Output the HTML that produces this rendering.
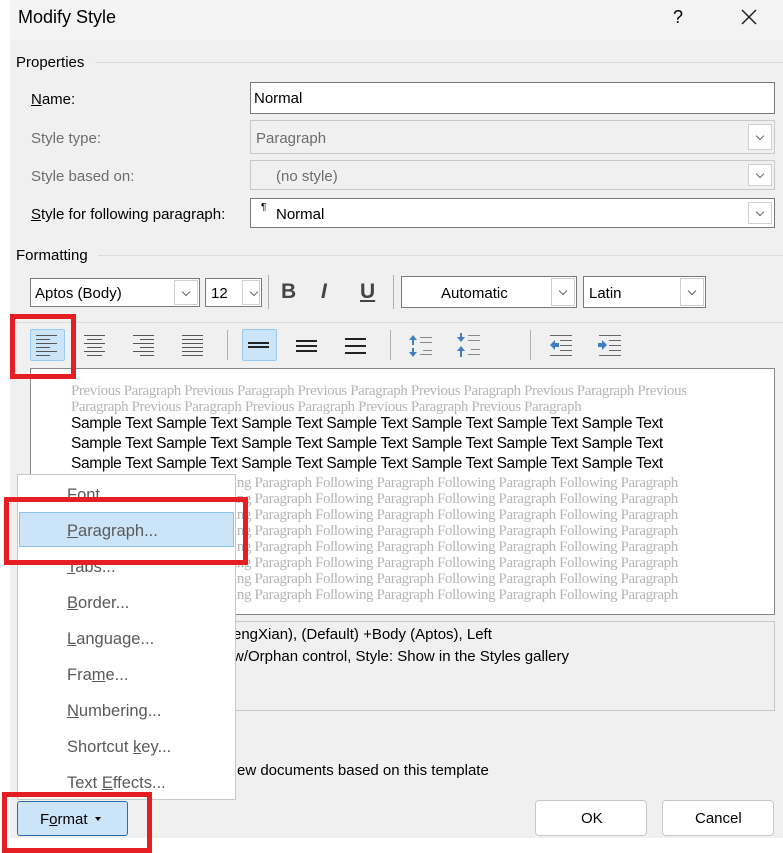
<!DOCTYPE html>
<html><head><meta charset="utf-8"><style>
*{margin:0;padding:0;box-sizing:border-box}
body{width:783px;height:853px;background:#fff;position:relative;overflow:hidden;font-family:"Liberation Sans",sans-serif;color:#000}
.a{position:absolute;white-space:nowrap}
.t{font-size:15px}
.g{color:#6d6d6d}
.box{position:absolute;border:1px solid #7a7a7a;background:#fff}
.dis{background:#f0f0f0;border-color:#c8c8c8}
.dd{position:absolute;right:2px;top:3px;bottom:3px;width:24px;border:1px solid #d0d0d0;background:#fff;font-size:10px;color:#777;text-align:center}
.dd:after{content:"";position:absolute;left:8px;top:50%;margin-top:-4px;width:5px;height:5px;border-right:1px solid #666;border-bottom:1px solid #666;transform:rotate(45deg)}
.sep{position:absolute;width:1px;background:#b0b0b0}
.ico{position:absolute}
.sel{position:absolute;background:#cce4f7;border:1px solid #99c9ef;border-radius:2px}
.red{position:absolute;border:5px solid #e41e22}
.mi{position:absolute;left:67px;font-size:16.5px;color:#5a5a5a}
.prev{font-family:"Liberation Serif",serif;color:#b5b5b5;font-size:14.9px;letter-spacing:-0.35px}
.smp{font-size:15.5px;letter-spacing:-0.35px}
.fol{font-family:"Liberation Serif",serif;color:#b5b5b5;font-size:14.9px;letter-spacing:-0.35px}
u{text-decoration:underline}
</style></head><body>
<div class="a" style="left:10px;top:0;width:773px;height:40px;background:#f3f3f3"></div>
<div class="a" style="left:10px;top:40px;width:773px;height:798px;background:#f0f0f0"></div>
<div class="a" style="left:18px;top:7px;font-size:18px">Modify Style</div>
<div class="a" style="left:673px;top:7px;font-size:18px">?</div>
<svg class="ico" style="left:741px;top:9px" width="16" height="16"><path d="M1 1L15 15M15 1L1 15" stroke="#222" stroke-width="1.5"/></svg>

<div class="a t" style="left:16px;top:54px">Properties</div>
<div class="a" style="left:95px;top:62px;width:688px;height:1px;background:#dcdcdc"></div>
<div class="a t" style="left:31px;top:91px"><u>N</u>ame:</div>
<div class="box" style="left:250px;top:82px;width:525px;height:32px"></div>
<div class="a t" style="left:254px;top:90px">Normal</div>
<div class="a t g" style="left:31px;top:130px">Style type:</div>
<div class="box dis" style="left:250px;top:120px;width:525px;height:34px"><div class="dd"></div></div>
<div class="a t g" style="left:256px;top:130px">Paragraph</div>
<div class="a t g" style="left:31px;top:168px">Style based on:</div>
<div class="box dis" style="left:250px;top:160px;width:525px;height:30px"><div class="dd"></div></div>
<div class="a t g" style="left:276px;top:168px">(no style)</div>
<div class="a t" style="left:31px;top:206px"><u>S</u>tyle for following paragraph:</div>
<div class="box" style="left:250px;top:198px;width:525px;height:30px"><div class="dd"></div></div>
<div class="a" style="left:261px;top:202px;font-size:10px">¶</div>
<div class="a t" style="left:276px;top:206px">Normal</div>

<div class="a t" style="left:16px;top:247px">Formatting</div>
<div class="a" style="left:98px;top:255px;width:685px;height:1px;background:#dcdcdc"></div>
<div class="box" style="left:30px;top:278px;width:170px;height:29px"><div class="dd" style="top:1px;bottom:1px;right:1px"></div></div>
<div class="a t" style="left:35px;top:285px">Aptos (Body)</div>
<div class="box" style="left:205px;top:278px;width:57px;height:29px"><div class="dd" style="top:1px;bottom:1px;right:1px;width:18px"></div></div>
<div class="a t" style="left:211px;top:285px">12</div>
<div class="sep" style="left:268px;top:275px;height:34px"></div>
<div class="a" style="left:281px;top:280px;font-size:21px;font-weight:bold;color:#444">B</div>
<div class="a" style="left:321px;top:280px;font-size:21px;font-style:italic;font-weight:bold;color:#444">I</div>
<div class="a" style="left:360px;top:280px;font-size:21px;font-weight:bold;color:#444;text-decoration:underline">U</div>
<div class="sep" style="left:393px;top:275px;height:34px"></div>
<div class="box" style="left:401px;top:276px;width:176px;height:32px"><div class="dd" style="top:1px;bottom:1px;right:1px"></div></div>
<div class="a t" style="left:441px;top:285px">Automatic</div>
<div class="box" style="left:583px;top:276px;width:123px;height:32px"><div class="dd" style="top:1px;bottom:1px;right:1px"></div></div>
<div class="a t" style="left:589px;top:285px">Latin</div>
<div class="a" style="left:10px;top:322px;width:773px;height:1px;background:#dcdcdc"></div>

<div class="sel" style="left:30px;top:329px;width:35px;height:32px"></div>
<svg class="ico" style="left:30px;top:329px" width="200" height="32" stroke="#555" stroke-width="1">
<path d="M6 6.5H27M6 10.5H20M6 14.5H27M6 18.5H20M6 22.5H27M6 26.5H20"/>
<path d="M54 6.5H75M57 10.5H72M54 14.5H75M57 18.5H72M54 22.5H75M57 26.5H72"/>
<path d="M103 6.5H124M110 10.5H124M103 14.5H124M110 18.5H124M103 22.5H124M110 26.5H124"/>
<path d="M152 6.5H173M152 10.5H173M152 14.5H173M152 18.5H173M152 22.5H173M152 26.5H173"/>
</svg>
<div class="sep" style="left:227px;top:330px;height:30px"></div>
<div class="sel" style="left:242px;top:329px;width:35px;height:32px"></div>
<svg class="ico" style="left:242px;top:329px" width="130" height="32" stroke="#222" stroke-width="2">
<path d="M6 14H27M6 18H27"/>
<path d="M54 12H75M54 17H75M54 22H75"/>
<path d="M103 10H124M103 17H124M103 24H124"/>
</svg>
<div class="sep" style="left:390px;top:330px;height:30px"></div>
<svg class="ico" style="left:405px;top:329px" width="90" height="32">
<g stroke="#888" stroke-width="1"><path d="M15 8.5H27M15 13.5H27M18 21.5H27M15 25.5H27"/><path d="M63 6.5H75M63 11.5H75M66 20.5H75M63 25.5H75"/></g>
<g fill="#3f7fc0" stroke="#3f7fc0" stroke-width="2"><path d="M8 10V16" /><path d="M4 11L8 6L12 11Z" stroke-width="0"/><path d="M8 19V24"/><path d="M4 23L8 28L12 23Z" stroke-width="0"/>
<path d="M56 4V9"/><path d="M52 8L56 13L60 8Z" stroke-width="0"/><path d="M56 21V28"/><path d="M52 22L56 17L60 22Z" stroke-width="0"/></g>
</svg>
<div class="sep" style="left:530px;top:330px;height:30px"></div>
<svg class="ico" style="left:545px;top:329px" width="90" height="32">
<g stroke="#666" stroke-width="1"><path d="M5 6.5H27M15 11.5H27M15 16.5H27M15 21.5H27M5 26.5H27"/><path d="M54 6.5H76M64 11.5H76M64 16.5H76M64 21.5H76M54 26.5H76"/></g>
<g fill="#3f7fc0"><path d="M5 16L10 11V14H14V18H10V21Z"/><path d="M62 16L57 11V14H53V18H57V21Z"/></g>
</svg>

<div class="box" style="left:30px;top:368px;width:745px;height:247px;border-color:#888"></div>
<div class="a prev" style="left:71px;top:383px">Previous Paragraph Previous Paragraph Previous Paragraph Previous Paragraph Previous Paragraph Previous</div>
<div class="a prev" style="left:71px;top:399px">Paragraph Previous Paragraph Previous Paragraph Previous Paragraph Previous Paragraph</div>
<div class="a smp" style="left:71px;top:415px">Sample Text Sample Text Sample Text Sample Text Sample Text Sample Text Sample Text</div>
<div class="a smp" style="left:71px;top:435px">Sample Text Sample Text Sample Text Sample Text Sample Text Sample Text Sample Text</div>
<div class="a smp" style="left:71px;top:455px">Sample Text Sample Text Sample Text Sample Text Sample Text Sample Text Sample Text</div>
<div class="a fol" style="left:71px;top:475px;line-height:16px;white-space:normal;width:625px;height:128px;overflow:hidden">Following Paragraph Following Paragraph Following Paragraph Following Paragraph Following Paragraph Following Paragraph Following Paragraph Following Paragraph Following Paragraph Following Paragraph Following Paragraph Following Paragraph Following Paragraph Following Paragraph Following Paragraph Following Paragraph Following Paragraph Following Paragraph Following Paragraph Following Paragraph Following Paragraph Following Paragraph Following Paragraph Following Paragraph Following Paragraph Following Paragraph Following Paragraph Following Paragraph Following Paragraph Following Paragraph Following Paragraph Following Paragraph Following Paragraph Following Paragraph Following Paragraph Following Paragraph Following Paragraph Following Paragraph Following Paragraph Following Paragraph Following Paragraph Following Paragraph Following Paragraph</div>

<div class="box" style="left:30px;top:621px;width:745px;height:90px;background:#f0f0f0;border-color:#c8c8c8"></div>
<div class="a t" style="left:233px;top:626px">engXian), (Default) +Body (Aptos), Left</div>
<div class="a t" style="left:233px;top:648px">w/Orphan control, Style: Show in the Styles gallery</div>
<div class="a t" style="left:237px;top:762px">ew documents based on this template</div>

<div class="box" style="left:535px;top:800px;width:112px;height:36px;border-color:#c8c8c8;border-radius:4px"></div>
<div class="a t" style="left:581px;top:810px">OK</div>
<div class="box" style="left:662px;top:800px;width:112px;height:36px;border-color:#c8c8c8;border-radius:4px"></div>
<div class="a t" style="left:695px;top:810px">Cancel</div>

<div class="a" style="left:17px;top:474px;width:219px;height:326px;background:#fff;border:1px solid #c8c8c8"></div>
<div class="a" style="left:19px;top:512px;width:215px;height:35px;background:#cce4f7;border:1px solid #8cc1ea"></div>
<div class="mi" style="top:486px">Font</div>
<div class="mi" style="top:522px"><u>P</u>aragraph...</div>
<div class="mi" style="top:558px"><u>T</u>abs...</div>
<div class="mi" style="top:594px"><u>B</u>order...</div>
<div class="mi" style="top:630px"><u>L</u>anguage...</div>
<div class="mi" style="top:666px">Fra<u>m</u>e...</div>
<div class="mi" style="top:702px"><u>N</u>umbering...</div>
<div class="mi" style="top:738px">Shortcut <u>k</u>ey...</div>
<div class="mi" style="top:774px">Text <u>E</u>ffects...</div>

<div class="a" style="left:17px;top:801px;width:111px;height:35px;background:#cce4f7;border:1px solid #2b6cb0;border-radius:3px"></div>
<div class="a t" style="left:40px;top:811px">F<u>o</u>rmat</div>
<div class="a" style="left:95px;top:817px;width:0;height:0;border-left:3.5px solid transparent;border-right:3.5px solid transparent;border-top:4px solid #000"></div>

<div class="red" style="left:10px;top:314px;width:66px;height:65px"></div>
<div class="red" style="left:4px;top:497px;width:244px;height:68px"></div>
<div class="red" style="left:2px;top:792px;width:150px;height:61px"></div>
</body></html>
